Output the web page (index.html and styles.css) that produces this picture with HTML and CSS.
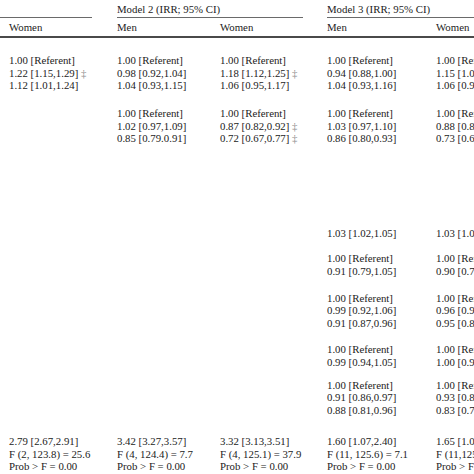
FILE: index.html
```html
<!DOCTYPE html>
<html>
<head>
<meta charset="UTF-8" />
<title>Incidence rate ratios</title>
<link rel="stylesheet" href="styles.css">
</head>
<body>
<table class="irr" border="0" cellspacing="0" cellpadding="0">
    <colgroup>
        <col class="c1"><col class="c2"><col class="c3"><col class="c4"><col class="c5">
    </colgroup>
    <thead>
        <tr class="models">
            <th><div class="span first">&nbsp;</div></th>
            <th colspan="2"><div class="span">Model 2 (IRR; 95% CI)</div></th>
            <th colspan="2"><div class="span last">Model 3 (IRR; 95% CI)</div></th>
        </tr>
        <tr class="sexes">
            <th>Women</th>
            <th>Men</th>
            <th>Women</th>
            <th>Men</th>
            <th>Women</th>
        </tr>
    </thead>
    <tbody>
        <!-- group A -->
        <tr class="gap-a">
            <td>1.00 [Referent]</td><td>1.00 [Referent]</td><td>1.00 [Referent]</td><td>1.00 [Referent]</td><td>1.00 [Referent]</td>
        </tr>
        <tr>
            <td>1.22 [1.15,1.29] <span class="sig">&Dagger;</span></td><td>0.98 [0.92,1.04]</td><td>1.18 [1.12,1.25] <span class="sig">&Dagger;</span></td><td>0.94 [0.88,1.00]</td><td>1.15 [1.09,1.22] <span class="sig">&Dagger;</span></td>
        </tr>
        <tr>
            <td>1.12 [1.01,1.24]</td><td>1.04 [0.93,1.15]</td><td>1.06 [0.95,1.17]</td><td>1.04 [0.93,1.16]</td><td>1.06 [0.96,1.18]</td>
        </tr>

        <!-- group B -->
        <tr class="gap-b">
            <td></td><td>1.00 [Referent]</td><td>1.00 [Referent]</td><td>1.00 [Referent]</td><td>1.00 [Referent]</td>
        </tr>
        <tr>
            <td></td><td>1.02 [0.97,1.09]</td><td>0.87 [0.82,0.92] <span class="sig">&Dagger;</span></td><td>1.03 [0.97,1.10]</td><td>0.88 [0.83,0.94] <span class="sig">&Dagger;</span></td>
        </tr>
        <tr>
            <td></td><td>0.85 [0.79.0.91]</td><td>0.72 [0.67,0.77] <span class="sig">&Dagger;</span></td><td>0.86 [0.80,0.93]</td><td>0.73 [0.68,0.79] <span class="sig">&Dagger;</span></td>
        </tr>

        <!-- group C -->
        <tr class="gap-c">
            <td></td><td></td><td></td><td>1.03 [1.02,1.05]</td><td>1.03 [1.01,1.04]</td>
        </tr>

        <!-- group D -->
        <tr class="gap-d">
            <td></td><td></td><td></td><td>1.00 [Referent]</td><td>1.00 [Referent]</td>
        </tr>
        <tr>
            <td></td><td></td><td></td><td>0.91 [0.79,1.05]</td><td>0.90 [0.78,1.03]</td>
        </tr>

        <!-- group E -->
        <tr class="gap-e">
            <td></td><td></td><td></td><td>1.00 [Referent]</td><td>1.00 [Referent]</td>
        </tr>
        <tr>
            <td></td><td></td><td></td><td>0.99 [0.92,1.06]</td><td>0.96 [0.90,1.03]</td>
        </tr>
        <tr>
            <td></td><td></td><td></td><td>0.91 [0.87,0.96]</td><td>0.95 [0.89,1.01]</td>
        </tr>

        <!-- group F -->
        <tr class="gap-e">
            <td></td><td></td><td></td><td>1.00 [Referent]</td><td>1.00 [Referent]</td>
        </tr>
        <tr>
            <td></td><td></td><td></td><td>0.99 [0.94,1.05]</td><td>1.00 [0.95,1.06]</td>
        </tr>

        <!-- group G -->
        <tr class="gap-g">
            <td></td><td></td><td></td><td>1.00 [Referent]</td><td>1.00 [Referent]</td>
        </tr>
        <tr>
            <td></td><td></td><td></td><td>0.91 [0.86,0.97]</td><td>0.93 [0.87,0.99]</td>
        </tr>
        <tr>
            <td></td><td></td><td></td><td>0.88 [0.81,0.96]</td><td>0.83 [0.76,0.91]</td>
        </tr>

        <!-- model fit -->
        <tr class="gap-h">
            <td>2.79 [2.67,2.91]</td><td>3.42 [3.27,3.57]</td><td>3.32 [3.13,3.51]</td><td>1.60 [1.07,2.40]</td><td>1.65 [1.09,2.50]</td>
        </tr>
        <tr>
            <td>F (2, 123.8) = 25.6</td><td>F (4, 124.4) = 7.7</td><td>F (4, 125.1) = 37.9</td><td>F (11, 125.6) = 7.1</td><td>F (11,125.2) = 9.4</td>
        </tr>
        <tr>
            <td>Prob &gt; F = 0.00</td><td>Prob &gt; F = 0.00</td><td>Prob &gt; F = 0.00</td><td>Prob &gt; F = 0.00</td><td>Prob &gt; F = 0.00</td>
        </tr>
    </tbody>
</table>
</body>
</html>
```

FILE: styles.css
```css
html, body{
    margin:0px;
    padding:0px;
    background:#fff;
    overflow:hidden;
}
body{
    width:474px;
    height:474px;
    color:#222;
    font:10.8px/12.6px "Liberation Serif", "Times New Roman", serif;
}

.irr{
    table-layout:fixed;
    border-collapse:collapse;
    width:547px;
}
.c1{ width:108px; }
.c2{ width:103px; }
.c3{ width:107px; }
.c4{ width:109px; }
.c5{ width:120px; }

.irr th, .irr td{
    padding:0px 0px 0px 9px;
    text-align:left;
    font-weight:normal;
    white-space:nowrap;
    vertical-align:top;
}

/* model spanner rules */
.models th{
    padding-top:3px;
}
.span{
    border-bottom:1px solid #6a6a6a;
    padding-bottom:1px;
    margin-right:15px;
}
.span.first{
    margin-left:-9px;
    margin-right:16px;
}
.span.last{
    margin-right:0px;
}

.sexes th{
    padding-top:3px;
    padding-bottom:3px;
    border-bottom:2px solid #4a4a4a;
}

.sig{
    color:#8a8a8a;
}

/* spacing between variable blocks */
.gap-a td{ padding-top:16px; }
.gap-b td{ padding-top:15px; }
.gap-c td{ padding-top:82px; }
.gap-d td{ padding-top:13px; }
.gap-e td{ padding-top:14px; }
.gap-g td{ padding-top:10px; }
.gap-h td{ padding-top:19px; }
```
